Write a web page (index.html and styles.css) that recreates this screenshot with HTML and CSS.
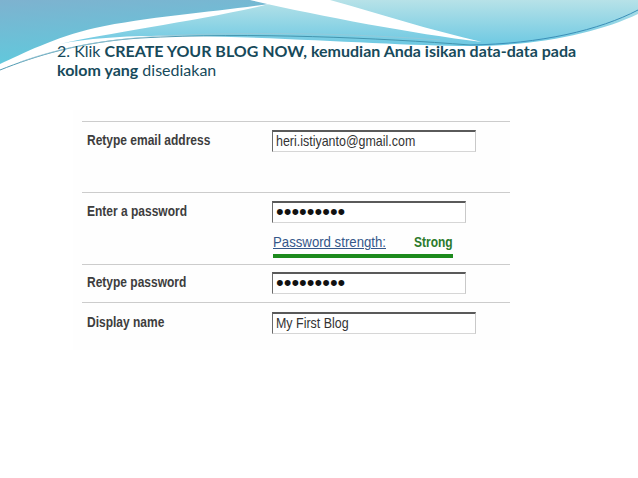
FILE: index.html
```html
<!DOCTYPE html>
<html lang="id">

<head>
	<meta charset="UTF-8">
	<title>Langkah 2</title>
	<link rel="stylesheet" href="styles.css">
</head>

<body>
	<div class="slide">
		<svg class="wave" width="638" height="80" viewBox="0 0 638 80">
			<defs>
				<linearGradient id="blueTop" x1="0" y1="0" x2="0.3" y2="1">
					<stop offset="0" stop-color="#7eb2cf" />
					<stop offset="1" stop-color="#5fcadd" />
				</linearGradient>
				<linearGradient id="cyanRight" x1="0" y1="0" x2="0" y2="1">
					<stop offset="0" stop-color="#b7e2e8" />
					<stop offset="1" stop-color="#6cc8e2" />
				</linearGradient>
			</defs>
			<path d="M0,0 H290 C245,10 160,14 95,28 C55,37 22,54 0,64 Z" fill="url(#blueTop)" />
			<path d="M285,0 H638 V14 C600,32 540,46 470,46 C400,46 300,38 190,36 C130,35 90,38 60,44 C110,32 220,18 285,0 Z" fill="url(#cyanRight)" />
			<path d="M250,0 H330 C380,14 430,30 482,42 C410,33 320,16 250,0 Z" fill="#ffffff" />
			<path d="M0,70 C35,56 80,42 140,38 C250,32 380,38 470,45" fill="none" stroke="#3c8fa9" stroke-width="0.9" />
			<path d="M20,62 C60,48 100,40 160,36 C260,31 360,34 440,40" fill="none" stroke="#9cc7d6" stroke-width="0.7" />
			<path d="M470,45 C540,44 600,30 638,10" fill="none" stroke="#3a8fb8" stroke-width="1" />
		</svg>

		<p class="intro">2. Klik <b>CREATE YOUR BLOG NOW, kemudian Anda isikan data-data pada</b> <b>kolom yang</b> disediakan</p>

		<div class="signup">
			<div class="row row-email">
				<div class="label"><span>Retype email address</span></div>
				<div class="field">
					<div class="box wide"><span class="txt">heri.istiyanto@gmail.com</span></div>
				</div>
			</div>
			<div class="row row-pass">
				<div class="label"><span>Enter a password</span></div>
				<div class="field">
					<div class="box narrow dots">•••••••••</div>
					<div class="strength">
						<span class="strength-link">Password strength:</span>
						<span class="strength-value">Strong</span>
					</div>
					<div class="strength-bar"></div>
				</div>
			</div>
			<div class="row row-retype">
				<div class="label"><span>Retype password</span></div>
				<div class="field">
					<div class="box narrow dots">•••••••••</div>
				</div>
			</div>
			<div class="row row-name">
				<div class="label"><span>Display name</span></div>
				<div class="field">
					<div class="box wide"><span class="txt">My First Blog</span></div>
				</div>
			</div>
		</div>
	</div>
</body>

</html>
```

FILE: styles.css
```css
body {
	margin: 0;
	background: #ffffff;
}

.slide {
	position: relative;
	width: 638px;
	height: 478px;
	overflow: hidden;
	background: #ffffff;
}

.wave {
	position: absolute;
	top: 0;
	left: 0;
}

.intro {
	position: relative;
	margin: 0;
	padding: 41px 40px 0 57px;
	font-family: Lato, "Open Sans", sans-serif;
	font-size: 16px;
	line-height: 19px;
	color: #174a5b;
}

.intro b {
	font-weight: 700;
}

.signup {
	width: 428px;
	margin: 31px 0 0 73px;
	padding: 11px 0 0 9px;
	background: #fefefe;
}

.row {
	display: flex;
	box-sizing: border-box;
	border-top: 1px solid #cccccc;
}

.row-email {
	height: 71px;
	padding-top: 8px;
}

.row-pass {
	height: 72px;
	padding-top: 8px;
}

.row-retype {
	height: 38px;
	padding-top: 7px;
}

.row-name {
	height: 48px;
	padding-top: 9px;
}

.label {
	width: 190px;
	padding: 1px 0 0 5px;
	box-sizing: border-box;
	font-family: "Liberation Sans", Arial, sans-serif;
	font-weight: bold;
	font-size: 15px;
	color: #3d3d3d;
}

.label span {
	display: inline-block;
	transform: scaleX(0.8);
	transform-origin: left;
	white-space: nowrap;
}

.box {
	height: 22px;
	box-sizing: border-box;
	border-top: 2px solid #5a5a5a;
	border-left: 1px solid #6a6a6a;
	border-right: 1px solid #c9c9c9;
	border-bottom: 1px solid #d6d6d6;
	padding: 0 0 0 3px;
	font-family: "Liberation Sans", Arial, sans-serif;
	font-size: 15px;
	line-height: 18px;
	color: #333333;
	background: #ffffff;
	white-space: nowrap;
}

.txt {
	display: inline-block;
	transform: scaleX(0.83);
	transform-origin: left;
}

.wide {
	width: 204px;
}

.narrow {
	width: 194px;
}

.dots {
	font-size: 22px;
	line-height: 18px;
	color: #111111;
}

.strength {
	display: flex;
	margin-top: 10px;
	padding-left: 1px;
	font-family: "Liberation Sans", Arial, sans-serif;
	font-size: 15px;
	line-height: 17px;
	white-space: nowrap;
}

.strength-link {
	display: inline-block;
	width: 141px;
	color: #34578a;
	text-decoration: underline;
	transform: scaleX(0.88);
	transform-origin: left;
}

.strength-value {
	display: inline-block;
	color: #2b7a2b;
	font-weight: bold;
	transform: scaleX(0.8);
	transform-origin: left;
}

.strength-bar {
	width: 180px;
	height: 4px;
	margin: 4px 0 0 1px;
	background: #1d8a1d;
}
```
